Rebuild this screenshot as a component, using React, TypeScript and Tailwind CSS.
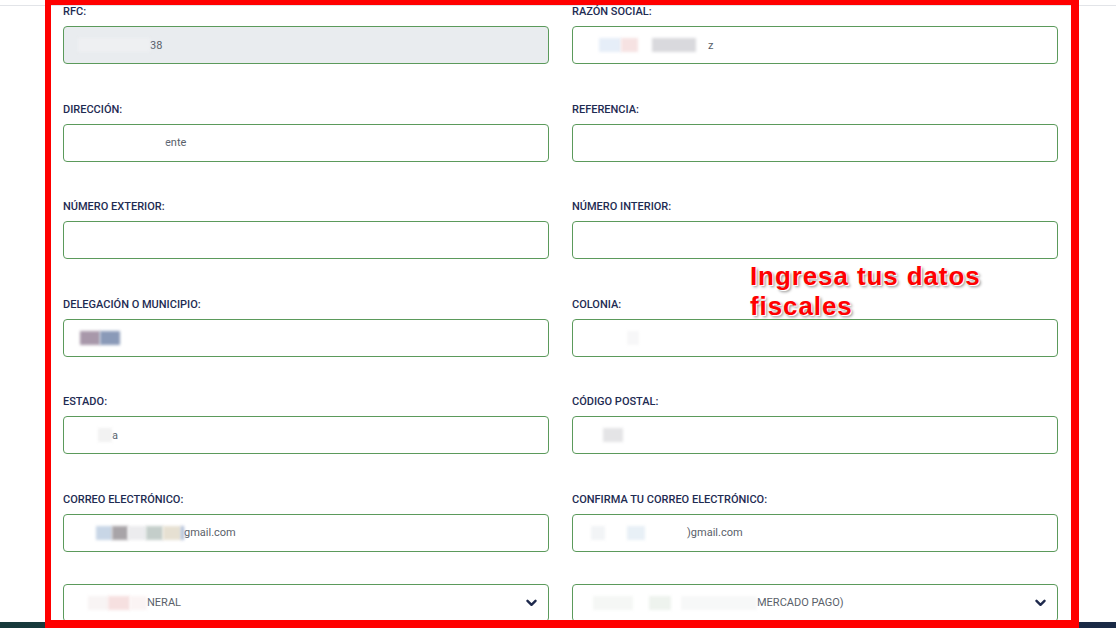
import type { ReactNode } from "react";

type Blot = { w: number; color: string; gap?: number };

interface FieldProps {
  label: string;
  disabled?: boolean;
  blots?: Blot[];
  lead?: number;
  text?: string;
}

function Blur({ w, color, gap = 0 }: Blot) {
  return (
    <span
      className="inline-block h-[14px] blur-[1.5px]"
      style={{ width: w, backgroundColor: color, marginRight: gap }}
    />
  );
}

function Box({
  children,
  disabled,
  select,
}: {
  children?: ReactNode;
  disabled?: boolean;
  select?: boolean;
}) {
  return (
    <div
      className={`flex h-[38px] items-center rounded-[4px] border border-[#5b9a5b] pl-[14px] pr-[10px] text-[11px] text-[#5a5f6a] ${
        disabled ? "bg-[#e9ecef]" : "bg-white"
      }`}
    >
      <div className="flex flex-1 items-center">{children}</div>
      {select ? (
        <svg width="11" height="8" viewBox="0 0 11 8" className="mr-[1px]">
          <path
            d="M1.5 1.8 5.5 5.8 9.5 1.8"
            fill="none"
            stroke="#1f2a4d"
            strokeWidth="2.4"
            strokeLinecap="round"
            strokeLinejoin="round"
          />
        </svg>
      ) : null}
    </div>
  );
}

function Field({ label, disabled, blots = [], lead = 0, text }: FieldProps) {
  return (
    <div>
      <div className="mb-[8px] text-[11px] font-medium uppercase leading-[13px] text-[#1e2b52]">
        {label}
      </div>
      <Box disabled={disabled}>
        <span style={{ width: lead }} className="inline-block" />
        {blots.map((b, i) => (
          <Blur key={i} {...b} />
        ))}
        {text ? <span className="leading-none">{text}</span> : null}
      </Box>
    </div>
  );
}

const FIELDS: FieldProps[] = [
  { label: "RFC:", disabled: true, blots: [{ w: 72, color: "#eef0f2" }], lead: 0, text: "38" },
  {
    label: "Razón social:",
    lead: 12,
    blots: [
      { w: 22, color: "#e6eef8" },
      { w: 17, color: "#f6e2e2", gap: 14 },
      { w: 44, color: "#d9d9dd", gap: 12 },
    ],
    text: "z",
  },
  { label: "Dirección:", blots: [{ w: 87, color: "#ffffff" }], text: "ente" },
  { label: "Referencia:" },
  { label: "Número exterior:" },
  { label: "Número interior:" },
  {
    label: "Delegación o municipio:",
    lead: 2,
    blots: [
      { w: 20, color: "#a898aa" },
      { w: 20, color: "#8a9ab8" },
    ],
  },
  { label: "Colonia:", lead: 40, blots: [{ w: 12, color: "#f7f7f8" }] },
  { label: "Estado:", lead: 20, blots: [{ w: 14, color: "#f2f2f2" }], text: "a" },
  { label: "Código postal:", lead: 16, blots: [{ w: 20, color: "#e4e4e6" }] },
  {
    label: "Correo electrónico:",
    lead: 18,
    blots: [
      { w: 16, color: "#c8d6e6" },
      { w: 16, color: "#a8a4a8" },
      { w: 18, color: "#ececee" },
      { w: 17, color: "#c4ceca" },
      { w: 18, color: "#e6e0d2" },
      { w: 3, color: "#a8b8d4" },
    ],
    text: "gmail.com",
  },
  {
    label: "Confirma tu correo electrónico:",
    lead: 4,
    blots: [
      { w: 14, color: "#f2f4f6", gap: 22 },
      { w: 18, color: "#e8f0f6", gap: 42 },
    ],
    text: ")gmail.com",
  },
];

export default function App() {
  return (
    <div className="relative h-[628px] w-[1116px] overflow-hidden bg-white font-['Roboto',sans-serif]">
      <div className="mt-[5px] h-px bg-[#e2e4e8]" />

      <div className="flex h-[616px] flex-col pl-[63px]">
        <div className="-mt-px grid grid-cols-[486px_486px] gap-x-[23px] gap-y-[38.6px]">
          {FIELDS.map((f) => (
            <Field key={f.label} {...f} />
          ))}
        </div>

        <div className="mt-[32px] grid grid-cols-[486px_486px] gap-x-[23px]">
          <Box select>
            <span className="inline-block w-[10px]" />
            <Blur w={20} color="#f8f4f4" />
            <Blur w={22} color="#f6e0e0" />
            <Blur w={17} color="#fbf4f4" />
            <span>NERAL</span>
          </Box>
          <Box select>
            <span className="inline-block w-[6px]" />
            <Blur w={40} color="#f5f7f5" gap={16} />
            <Blur w={22} color="#eef3ee" gap={10} />
            <Blur w={76} color="#f7f8f8" />
            <span>MERCADO PAGO)</span>
          </Box>
        </div>
      </div>

      <div className="h-[6px] bg-gradient-to-r from-[#173a3b] to-[#1a2a46]" />

      {/* annotation overlay */}
      <div className="pointer-events-none absolute left-[45px] top-[-1px] h-[629px] w-[1034px] border-t-[6px] border-r-[8px] border-b-[8px] border-l-[6px] border-[#ff0000]" />
      <div className="pointer-events-none absolute left-[750px] top-[261px] font-['Liberation_Sans',Arial,sans-serif] text-[26px] font-bold leading-[30px] tracking-[0.9px] text-[#ff0000] [text-shadow:1px_1px_0_#fff,2px_2px_3px_rgba(0,0,0,0.45)]">
        Ingresa tus datos
        <br />
        fiscales
      </div>
    </div>
  );
}
